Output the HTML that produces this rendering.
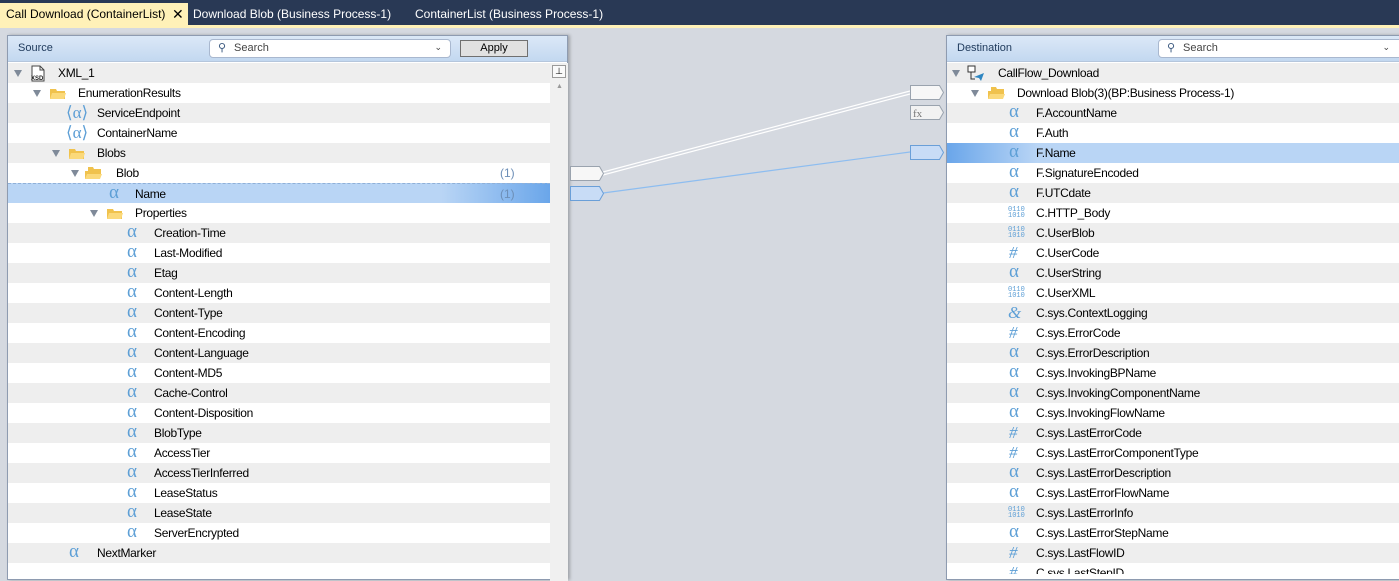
<!DOCTYPE html>
<html><head><meta charset="utf-8">
<style>
*{margin:0;padding:0;box-sizing:border-box}
body{width:1399px;height:574px;overflow:hidden;background:#d5d9e0;font-family:"Liberation Sans",sans-serif;font-size:12px;color:#000;position:relative}
.tabs{position:absolute;left:0;top:0;width:1399px;height:25px;background:#293955}
.tab{position:absolute;top:3px;height:22px;line-height:22px;font-size:12px;color:#fff;padding-left:6px}
.tab.act{background:#fff1b8;color:#000;left:0;width:188px}
.ystrip{position:absolute;left:0;top:25px;width:1399px;height:3px;background:#fff1b8}
.panel{position:absolute;top:35px;background:#fff;border:1px solid #8e9bb0;box-shadow:2px 0 3px rgba(0,0,0,.25)}
.hdr{position:absolute;left:0;top:0;right:0;height:26px;background:linear-gradient(#dbe8f7,#c3d8f0);border-bottom:1px solid #b5c6dc}
.hdr .t{position:absolute;left:10px;top:6px;font-size:11px;color:#1e395b}
.search{position:absolute;top:3px;height:19px;background:#fff;border:1px solid #a9b8cf;border-radius:4px;font-size:11px;color:#444;line-height:17px;padding-left:24px}
.row{position:absolute;left:0;height:20px;line-height:20px;white-space:nowrap}
.g{background:#eeeeee}
.w{background:#fff}
.al{position:absolute;top:-1px;font-family:"Liberation Serif",serif;font-size:19px;color:#5d9fd6;line-height:20px}
.tx{position:absolute;top:0;letter-spacing:-0.3px}
.tri{position:absolute;top:7px;width:0;height:0;border-left:4px solid transparent;border-right:4px solid transparent;border-top:7px solid #7f8a99}
.cnt{position:absolute;top:0;color:#6d8fb7}
.bin{position:absolute;top:4px;font-size:7px;line-height:6px;color:#5d9fd6;font-family:"Liberation Mono",monospace;letter-spacing:0}
</style></head><body>
<div class="tabs">
 <div class="tab act">Call Download (ContainerList) <span style="position:absolute;left:172px;font-size:14px">✕</span></div>
 <div class="tab" style="left:187px">Download Blob (Business Process-1)</div>
 <div class="tab" style="left:409px">ContainerList (Business Process-1)</div>
</div>
<div class="ystrip"></div>

<div class="panel" style="left:7px;width:561px;height:545px">
 <div class="hdr"><span class="t">Source</span>
  <div class="search" style="left:201px;width:242px">Search<span style="position:absolute;left:8px;top:0;color:#3c5a80">⚲</span><span style="position:absolute;right:8px;top:-1px;font-size:9px">⌄</span></div>
  <div style="position:absolute;left:452px;top:4px;width:68px;height:17px;border:1px solid #707070;background:#e1e1e1;text-align:center;font-size:11px;line-height:15px">Apply</div>
 </div>
 <div style="position:absolute;left:542px;top:27px;width:18px;height:518px;background:#f0f0f0"></div>
 <div style="position:absolute;left:544px;top:29px;width:14px;height:13px;border:1px solid #9a9a9a;background:#fafafa;font-size:9px;text-align:center;line-height:11px">⊥</div>
 <div style="position:absolute;left:548px;top:47px;font-size:7px;color:#999">▲</div>
</div>

<div class="panel" style="left:946px;width:460px;height:545px">
 <div class="hdr"><span class="t">Destination</span>
  <div class="search" style="left:211px;width:245px">Search<span style="position:absolute;left:8px;top:0;color:#3c5a80">⚲</span><span style="position:absolute;right:12px;top:-1px;font-size:9px">⌄</span></div>
 </div>
</div>

<div id="src" style="position:absolute;left:8px;top:63px;width:542px;height:510px;overflow:hidden">
 <div class="row g" style="top:0;width:542px"><div class="tri" style="left:6px"></div>
  <svg style="position:absolute;left:22px;top:2px" width="16" height="17"><path d="M2 1h8l4 4v11H2z" fill="#fff" stroke="#444"/><path d="M10 1v4h4" fill="none" stroke="#444"/><text x="1" y="15" font-size="6" font-family="Liberation Sans" font-weight="bold" fill="#222">XSD</text></svg>
  <span class="tx" style="left:50px">XML_1</span></div>
 <div class="row w" style="top:20px;width:542px"><div class="tri" style="left:25px"></div>
  <svg style="position:absolute;left:41px;top:4px" width="18" height="13"><path d="M1 2h6l1 2h8v8H1z" fill="#f0c24d"/><path d="M3 6h14l-2 6H1z" fill="#fbd97a"/></svg>
  <span class="tx" style="left:70px">EnumerationResults</span></div>
 <div class="row g" style="top:40px;width:542px"><span class="al" style="left:58px;font-size:17px;top:0">⟨α⟩</span><span class="tx" style="left:89px">ServiceEndpoint</span></div>
 <div class="row w" style="top:60px;width:542px"><span class="al" style="left:58px;font-size:17px;top:0">⟨α⟩</span><span class="tx" style="left:89px">ContainerName</span></div>
 <div class="row g" style="top:80px;width:542px"><div class="tri" style="left:44px"></div>
  <svg style="position:absolute;left:60px;top:4px" width="18" height="13"><path d="M1 2h6l1 2h8v8H1z" fill="#f0c24d"/><path d="M3 6h14l-2 6H1z" fill="#fbd97a"/></svg>
  <span class="tx" style="left:89px">Blobs</span></div>
 <div class="row w" style="top:100px;width:542px"><div class="tri" style="left:63px"></div>
  <svg style="position:absolute;left:76px;top:3px" width="20" height="14"><path d="M4 1h5l1 2h7v5H4z" fill="#f0c24d"/><path d="M1 5h6l1 2h8v6H1z" fill="#f0c24d"/><path d="M3 8h15l-2 5H1z" fill="#fbd97a"/></svg>
  <span class="tx" style="left:108px">Blob</span><span class="cnt" style="left:492px">(1)</span></div>
 <div class="row" style="top:120px;width:542px;background:linear-gradient(90deg,#b9d5f5 0,#b9d5f5 80%,#6aa6ea 100%);border-top:1px dashed #8fb0d8"><span class="al" style="left:101px">α</span><span class="tx" style="left:127px">Name</span><span class="cnt" style="left:492px">(1)</span></div>
 <div class="row w" style="top:140px;width:542px"><div class="tri" style="left:82px"></div>
  <svg style="position:absolute;left:98px;top:4px" width="18" height="13"><path d="M1 2h6l1 2h8v8H1z" fill="#f0c24d"/><path d="M3 6h14l-2 6H1z" fill="#fbd97a"/></svg>
  <span class="tx" style="left:127px">Properties</span></div>
 <div class="row g" style="top:160px;width:542px"><span class="al" style="left:119px">α</span><span class="tx" style="left:146px">Creation-Time</span></div>
 <div class="row w" style="top:180px;width:542px"><span class="al" style="left:119px">α</span><span class="tx" style="left:146px">Last-Modified</span></div>
 <div class="row g" style="top:200px;width:542px"><span class="al" style="left:119px">α</span><span class="tx" style="left:146px">Etag</span></div>
 <div class="row w" style="top:220px;width:542px"><span class="al" style="left:119px">α</span><span class="tx" style="left:146px">Content-Length</span></div>
 <div class="row g" style="top:240px;width:542px"><span class="al" style="left:119px">α</span><span class="tx" style="left:146px">Content-Type</span></div>
 <div class="row w" style="top:260px;width:542px"><span class="al" style="left:119px">α</span><span class="tx" style="left:146px">Content-Encoding</span></div>
 <div class="row g" style="top:280px;width:542px"><span class="al" style="left:119px">α</span><span class="tx" style="left:146px">Content-Language</span></div>
 <div class="row w" style="top:300px;width:542px"><span class="al" style="left:119px">α</span><span class="tx" style="left:146px">Content-MD5</span></div>
 <div class="row g" style="top:320px;width:542px"><span class="al" style="left:119px">α</span><span class="tx" style="left:146px">Cache-Control</span></div>
 <div class="row w" style="top:340px;width:542px"><span class="al" style="left:119px">α</span><span class="tx" style="left:146px">Content-Disposition</span></div>
 <div class="row g" style="top:360px;width:542px"><span class="al" style="left:119px">α</span><span class="tx" style="left:146px">BlobType</span></div>
 <div class="row w" style="top:380px;width:542px"><span class="al" style="left:119px">α</span><span class="tx" style="left:146px">AccessTier</span></div>
 <div class="row g" style="top:400px;width:542px"><span class="al" style="left:119px">α</span><span class="tx" style="left:146px">AccessTierInferred</span></div>
 <div class="row w" style="top:420px;width:542px"><span class="al" style="left:119px">α</span><span class="tx" style="left:146px">LeaseStatus</span></div>
 <div class="row g" style="top:440px;width:542px"><span class="al" style="left:119px">α</span><span class="tx" style="left:146px">LeaseState</span></div>
 <div class="row w" style="top:460px;width:542px"><span class="al" style="left:119px">α</span><span class="tx" style="left:146px">ServerEncrypted</span></div>
 <div class="row g" style="top:480px;width:542px"><span class="al" style="left:61px">α</span><span class="tx" style="left:89px">NextMarker</span></div>
</div>

<div style="position:absolute;left:947px;top:63px;width:452px;height:511px;overflow:hidden">
 <div class="row g" style="top:0;width:452px"><div class="tri" style="left:5px"></div>
  <svg style="position:absolute;left:20px;top:2px" width="18" height="17"><rect x="1" y="1" width="7" height="6" fill="#fff" stroke="#333"/><path d="M4 7v7h4" fill="none" stroke="#333"/><path d="M7 12l10-4-3 8-2-3z" fill="#2e86c1"/></svg>
  <span class="tx" style="left:51px">CallFlow_Download</span></div>
 <div class="row w" style="top:20px;width:452px"><div class="tri" style="left:24px"></div>
  <svg style="position:absolute;left:40px;top:3px" width="20" height="14"><path d="M4 1h5l1 2h7v5H4z" fill="#f0c24d"/><path d="M1 5h6l1 2h8v6H1z" fill="#f0c24d"/><path d="M3 8h15l-2 5H1z" fill="#fbd97a"/></svg>
  <span class="tx" style="left:70px">Download Blob(3)(BP:Business Process-1)</span></div>
 <div class="row g" style="top:40px;width:452px"><span class="al" style="left:62px">α</span><span class="tx" style="left:89px">F.AccountName</span></div>
 <div class="row w" style="top:60px;width:452px"><span class="al" style="left:62px">α</span><span class="tx" style="left:89px">F.Auth</span></div>
 <div class="row" style="top:80px;width:452px;background:linear-gradient(90deg,#6aa6ea 0,#b9d5f5 20%,#b9d5f5 100%)"><span class="al" style="left:62px">α</span><span class="tx" style="left:89px">F.Name</span></div>
 <div class="row w" style="top:100px;width:452px"><span class="al" style="left:62px">α</span><span class="tx" style="left:89px">F.SignatureEncoded</span></div>
 <div class="row g" style="top:120px;width:452px"><span class="al" style="left:62px">α</span><span class="tx" style="left:89px">F.UTCdate</span></div>
 <div class="row w" style="top:140px;width:452px"><span class="bin" style="left:61px">0110<br>1010</span><span class="tx" style="left:89px">C.HTTP_Body</span></div>
 <div class="row g" style="top:160px;width:452px"><span class="bin" style="left:61px">0110<br>1010</span><span class="tx" style="left:89px">C.UserBlob</span></div>
 <div class="row w" style="top:180px;width:452px"><span class="al" style="left:62px;font-size:17px;font-style:italic;top:0">#</span><span class="tx" style="left:89px">C.UserCode</span></div>
 <div class="row g" style="top:200px;width:452px"><span class="al" style="left:62px">α</span><span class="tx" style="left:89px">C.UserString</span></div>
 <div class="row w" style="top:220px;width:452px"><span class="bin" style="left:61px">0110<br>1010</span><span class="tx" style="left:89px">C.UserXML</span></div>
 <div class="row g" style="top:240px;width:452px"><span class="al" style="left:61px;font-size:17px;font-style:italic;top:0">&amp;</span><span class="tx" style="left:89px">C.sys.ContextLogging</span></div>
 <div class="row w" style="top:260px;width:452px"><span class="al" style="left:62px;font-size:17px;font-style:italic;top:0">#</span><span class="tx" style="left:89px">C.sys.ErrorCode</span></div>
 <div class="row g" style="top:280px;width:452px"><span class="al" style="left:62px">α</span><span class="tx" style="left:89px">C.sys.ErrorDescription</span></div>
 <div class="row w" style="top:300px;width:452px"><span class="al" style="left:62px">α</span><span class="tx" style="left:89px">C.sys.InvokingBPName</span></div>
 <div class="row g" style="top:320px;width:452px"><span class="al" style="left:62px">α</span><span class="tx" style="left:89px">C.sys.InvokingComponentName</span></div>
 <div class="row w" style="top:340px;width:452px"><span class="al" style="left:62px">α</span><span class="tx" style="left:89px">C.sys.InvokingFlowName</span></div>
 <div class="row g" style="top:360px;width:452px"><span class="al" style="left:62px;font-size:17px;font-style:italic;top:0">#</span><span class="tx" style="left:89px">C.sys.LastErrorCode</span></div>
 <div class="row w" style="top:380px;width:452px"><span class="al" style="left:62px;font-size:17px;font-style:italic;top:0">#</span><span class="tx" style="left:89px">C.sys.LastErrorComponentType</span></div>
 <div class="row g" style="top:400px;width:452px"><span class="al" style="left:62px">α</span><span class="tx" style="left:89px">C.sys.LastErrorDescription</span></div>
 <div class="row w" style="top:420px;width:452px"><span class="al" style="left:62px">α</span><span class="tx" style="left:89px">C.sys.LastErrorFlowName</span></div>
 <div class="row g" style="top:440px;width:452px"><span class="bin" style="left:61px">0110<br>1010</span><span class="tx" style="left:89px">C.sys.LastErrorInfo</span></div>
 <div class="row w" style="top:460px;width:452px"><span class="al" style="left:62px">α</span><span class="tx" style="left:89px">C.sys.LastErrorStepName</span></div>
 <div class="row g" style="top:480px;width:452px"><span class="al" style="left:62px;font-size:17px;font-style:italic;top:0">#</span><span class="tx" style="left:89px">C.sys.LastFlowID</span></div>
 <div class="row w" style="top:500px;width:452px"><span class="al" style="left:62px;font-size:17px;font-style:italic;top:0">#</span><span class="tx" style="left:89px">C.sys.LastStepID</span></div>
</div>

<svg style="position:absolute;left:0;top:0" width="1399" height="574">
 <line x1="603" y1="172" x2="910" y2="91" stroke="#fff" stroke-width="1.2"/>
 <line x1="603" y1="175" x2="910" y2="94" stroke="#fff" stroke-width="1.2"/>
 <line x1="603" y1="193" x2="910" y2="152" stroke="#8dbdf0" stroke-width="1.2"/>
 <path d="M570.5 166.5h29l4 7-4 7h-29z" fill="#f7f7f7" stroke="#9aa3ae"/>
 <path d="M570.5 186.5h29l4 7-4 7h-29z" fill="#c8dcf6" stroke="#6a9fd8"/>
 <path d="M910.5 85.5h29l4 7-4 7h-29z" fill="#f7f7f7" stroke="#9aa3ae"/>
 <path d="M910.5 105.5h29l4 7-4 7h-29z" fill="#f2f2f2" stroke="#9aa3ae"/>
 <text x="913" y="117" font-size="11" font-family="Liberation Serif" fill="#777">fx</text>
 <path d="M910.5 145.5h29l4 7-4 7h-29z" fill="#c8dcf6" stroke="#6a9fd8"/>
</svg>
</body></html>
